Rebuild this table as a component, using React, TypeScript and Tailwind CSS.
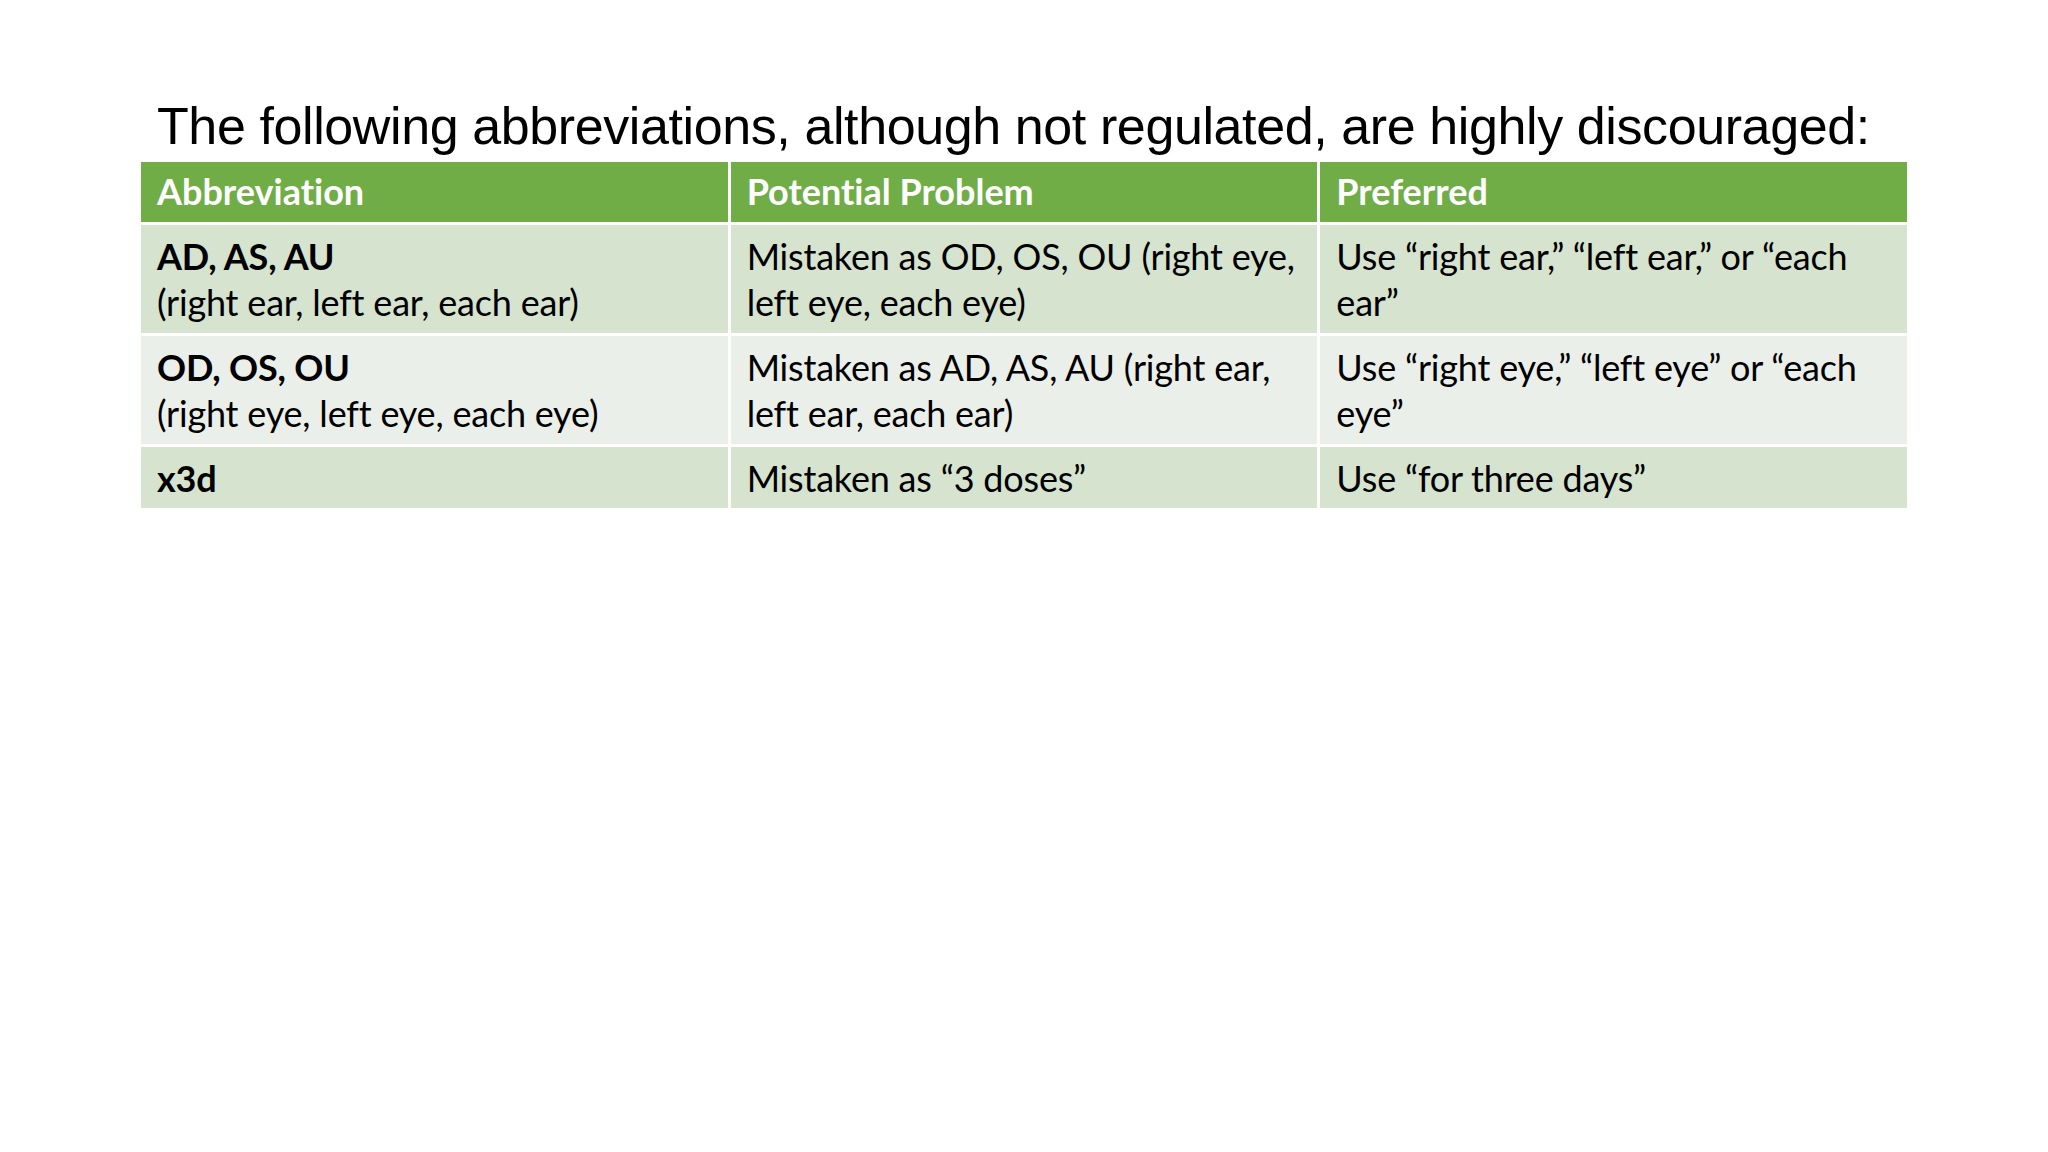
const rows = [
  {
    abbr: "AD, AS, AU",
    sub: "(right ear, left ear, each ear)",
    problem: ["Mistaken as OD, OS, OU (right eye,", "left eye, each eye)"],
    preferred: ["Use \u201Cright ear,\u201D \u201Cleft ear,\u201D or \u201Ceach", "ear\u201D"],
    bg: "bg-[#d5e3cf]",
    h: "h-[108px]",
  },
  {
    abbr: "OD, OS, OU",
    sub: "(right eye, left eye, each eye)",
    problem: ["Mistaken as AD, AS, AU (right ear,", "left ear, each ear)"],
    preferred: ["Use \u201Cright eye,\u201D \u201Cleft eye\u201D or \u201Ceach", "eye\u201D"],
    bg: "bg-[#ebefe9]",
    h: "h-[108px]",
  },
  {
    abbr: "x3d",
    sub: "",
    problem: ["Mistaken as \u201C3 doses\u201D"],
    preferred: ["Use \u201Cfor three days\u201D"],
    bg: "bg-[#d5e3cf]",
    h: "h-[61px]",
  },
];

const body =
  "font-['Lato',sans-serif] text-[36px] leading-[46px] tracking-[-0.2px] text-black whitespace-nowrap [font-variant-ligatures:none]";

export default function App() {
  return (
    <div className="h-[1152px] w-[2048px] bg-white">
      <div className="pl-[141px] pt-[96px]">
        <h1 className="whitespace-nowrap pl-[16px] font-['Liberation_Sans',Arial,sans-serif] text-[52px] leading-[60px] tracking-[-0.4px] text-black">
          The following abbreviations, although not regulated, are highly discouraged:
        </h1>
        <div className="mt-[6px] grid w-[1766px] grid-cols-3 gap-x-[3px] gap-y-[3px]">
          {["Abbreviation", "Potential Problem", "Preferred"].map((t) => (
            <div
              key={t}
              className="flex h-[60px] items-center bg-[#70ad47] px-[16px] pb-[2px] font-['Lato',sans-serif] text-[36px] font-bold text-white [font-variant-ligatures:none]"
            >
              {t}
            </div>
          ))}
          {rows.map((r) => (
            <>
              <div key={r.abbr + "a"} className={`${r.bg} ${r.h} px-[16px] pt-[8px] ${body}`}>
                <div className="font-bold">{r.abbr}</div>
                {r.sub && <div>{r.sub}</div>}
              </div>
              <div key={r.abbr + "b"} className={`${r.bg} ${r.h} px-[16px] pt-[8px] ${body}`}>
                {r.problem.map((l) => (
                  <div key={l}>{l}</div>
                ))}
              </div>
              <div key={r.abbr + "c"} className={`${r.bg} ${r.h} px-[16px] pt-[8px] ${body}`}>
                {r.preferred.map((l) => (
                  <div key={l}>{l}</div>
                ))}
              </div>
            </>
          ))}
        </div>
      </div>
    </div>
  );
}
